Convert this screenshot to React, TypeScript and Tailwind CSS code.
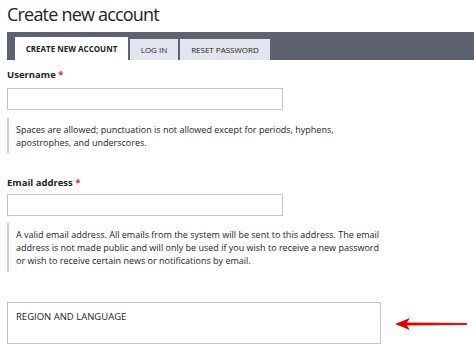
export default function App() {
  return (
    <div className="w-[474px] h-[353px] overflow-hidden bg-white text-[#232323] font-['Open_Sans',sans-serif]">
      <h1 className="pl-[7px] text-[18px] tracking-[-0.8px] leading-[28px] font-normal">Create new account</h1>

      {/* Tabs */}
      <div className="mt-[4px] ml-[7px] h-[28px] bg-[#5d6271] flex items-end pl-[8px] gap-[2px]">
        <div className="h-[23px] w-[113px] bg-white flex items-center justify-center text-[8px] font-bold pt-[1px]">
          CREATE NEW ACCOUNT
        </div>
        <div className="h-[21px] w-[48px] bg-[#e3e5ee] flex items-center justify-center text-[8px]">
          LOG IN
        </div>
        <div className="h-[21px] w-[90px] bg-[#e3e5ee] flex items-center justify-center text-[8px]">
          RESET PASSWORD
        </div>
      </div>

      <div className="pl-[7px]">
        {/* Username */}
        <div className="mt-[8px] text-[9.5px] leading-[14px] font-bold">
          Username <span className="text-[#d9262b]">*</span>
        </div>
        <div className="mt-[6px] w-[276px] h-[22px] border border-[#c4c4c4] bg-white" />
        <div className="mt-[8px] border-l-2 border-[#cfcfcf] pl-[7px] pt-[5px] pb-[4px] text-[9px] leading-[13px]">
          <p>Spaces are allowed; punctuation is not allowed except for periods, hyphens,</p>
          <p>apostrophes, and underscores.</p>
        </div>

        {/* Email */}
        <div className="mt-[23px] text-[9.5px] leading-[14px] font-bold">
          Email address <span className="text-[#d9262b]">*</span>
        </div>
        <div className="mt-[4px] w-[276px] h-[22px] border border-[#c4c4c4] bg-white" />
        <div className="mt-[7px] border-l-2 border-[#cfcfcf] pl-[7px] pt-[5px] pb-[5px] text-[9px] leading-[13px]">
          <p>A valid email address. All emails from the system will be sent to this address. The email</p>
          <p>address is not made public and will only be used if you wish to receive a new password</p>
          <p>or wish to receive certain news or notifications by email.</p>
        </div>

        {/* Region and language */}
        <div className="mt-[30px] flex items-center">
          <div className="w-[374px] h-[42px] border border-[#c4c4c4] pl-[8px] pt-[7px] text-[9.5px] leading-[14px]">
            REGION AND LANGUAGE
          </div>
          <svg className="ml-[14px] mt-[2px]" width="73" height="14" viewBox="0 0 73 14">
            <defs>
              <linearGradient id="arrowFade" x1="0" x2="1" y1="0" y2="0">
                <stop offset="0" stopColor="#d80000" />
                <stop offset="1" stopColor="#ee1010" />
              </linearGradient>
            </defs>
            <path d="M0 7 L15 1 L12 5.6 L72 6 L72 8 L12 8.4 L15 13 Z" fill="url(#arrowFade)" />
          </svg>
        </div>
      </div>
    </div>
  )
}
